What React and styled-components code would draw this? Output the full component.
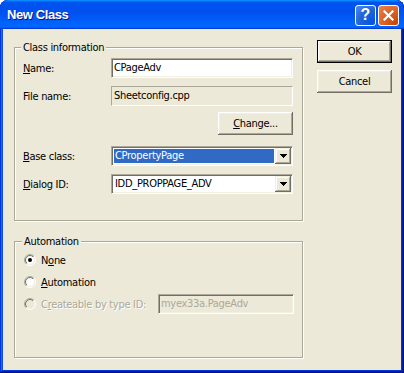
import React from 'react'
import styled, { createGlobalStyle } from 'styled-components'

const GlobalStyle = createGlobalStyle`
  html, body { margin: 0; padding: 0; background: #fff; }
  body {
    font-family: "DejaVu Sans", "Liberation Sans", sans-serif;
    font-stretch: condensed;
    font-size: 11px;
    letter-spacing: -0.3px;
    color: #000;
  }
`

const Window = styled.div`
  width: 404px;
  height: 373px;
  box-sizing: border-box;
  display: flex;
  flex-direction: column;
  background: #0831d9;
  border-radius: 8px 8px 0 0;
  overflow: hidden;
  box-shadow: inset -1px -1px #00138c, inset 1px 1px #0831d9, inset -2px -2px #001ea0,
    inset 2px 2px #166aee, inset -3px -3px #003bda, inset 3px 3px #0855dd;
`

const TitleBar = styled.div`
  height: 29px;
  flex: none;
  display: flex;
  align-items: center;
  padding: 0 5px 0 7px;
  background: linear-gradient(180deg, #0997ff, #0053ee 8%, #0050ee 40%, #06f 88%, #06f 93%, #005bff 95%, #003dd7 96%, #003dd7);
  border-radius: 8px 8px 0 0;
`

const Title = styled.div`
  flex: 1;
  font-family: "Liberation Sans", Arial, sans-serif;
  font-stretch: normal;
  font-weight: bold;
  font-size: 13px;
  color: #fff;
  text-shadow: 1px 1px #0f1089;
  letter-spacing: -0.4px;
`

const CaptionButton = styled.div`
  width: 21px;
  height: 21px;
  box-sizing: border-box;
  margin: 1px 0 0 ${p => p.$gap || 0}px;
  border: 1px solid #fff;
  border-radius: 3px;
  display: flex;
  align-items: center;
  justify-content: center;
  background: ${p => p.$close
    ? 'radial-gradient(circle at 90% 90%, #cc4600 0%, #dc6527 55%, #e8854f 100%)'
    : 'radial-gradient(circle at 90% 90%, #0054e9 0%, #2263d5 55%, #4f8cf2 100%)'};
  color: #fff;
  font-family: "Liberation Sans", Arial, sans-serif;
  font-stretch: normal;
  letter-spacing: 0;
  font-weight: bold;
  font-size: 16px;
`

const Client = styled.div`
  flex: 1;
  margin: 0 3px 3px;
  background: #ece9d8;
  display: flex;
  align-items: flex-start;
  padding: 11px 0 0 11px;
`

const LeftCol = styled.div`
  margin-top: 1px;
  display: flex;
  flex-direction: column;
`

const RightCol = styled.div`
  margin-left: 14px;
  display: flex;
  flex-direction: column;
  gap: 7px;
`

const Group = styled.fieldset`
  margin: ${p => p.$top || 0}px 0 0;
  padding: ${p => p.$pad};
  width: 289px;
  min-width: 0;
  box-sizing: border-box;
  border: 1px solid #aca899;
  box-shadow: inset 1px 1px #fff, 1px 1px #fff;
`

const Legend = styled.legend`
  padding: 0 2px;
  margin-left: -2px;
  line-height: 13px;
  background: #ece9d8;
`

const Row = styled.div`
  display: flex;
  align-items: center;
  justify-content: ${p => (p.$end ? 'flex-end' : 'flex-start')};
  margin-top: ${p => p.$top || 0}px;
`

const Label = styled.span`
  width: 88px;
  padding-top: 1px;
`

const Edit = styled.div`
  width: ${p => p.$w || 182}px;
  height: 20px;
  box-sizing: border-box;
  padding: 0 ${p => (p.$static ? 2 : 1)}px;
  line-height: ${p => (p.$static ? 18 : 16)}px;
  white-space: nowrap;
  overflow: hidden;
  margin-left: ${p => (p.$auto ? 'auto' : '0')};
  background: ${p => (p.$white ? '#fff' : '#ece9d8')};
  color: ${p => (p.$disabled ? '#aca899' : '#000')};
  border: 1px solid;
  border-color: #aca899 #fff #fff #aca899;
  box-shadow: ${p => (p.$static ? 'none' : 'inset 1px 1px #716f64, inset -1px -1px #f1efe2')};
  ${p => (p.$static ? '' : 'padding: 1px 2px;')}
`

const Combo = styled.div`
  width: 182px;
  height: 20px;
  box-sizing: border-box;
  display: flex;
  background: #fff;
  border: 1px solid;
  border-color: #aca899 #fff #fff #aca899;
  box-shadow: inset 1px 1px #716f64, inset -1px -1px #f1efe2;
  padding: 1px;
`

const ComboValue = styled.div`
  flex: 1;
  margin: 1px;
  padding: 0 1px;
  line-height: 14px;
  white-space: nowrap;
  background: ${p => (p.$selected ? '#316ac5' : '#fff')};
  color: ${p => (p.$selected ? '#fff' : '#000')};
`

const DropButton = styled.div`
  width: 16px;
  height: 16px;
  display: flex;
  align-items: center;
  justify-content: center;
  background: #ece9d8;
  box-shadow: inset -1px -1px #716f64, inset 1px 1px #f1efe2, inset -2px -2px #aca899, inset 2px 2px #fff;
`

const PushButton = styled.button`
  width: 75px;
  height: 23px;
  box-sizing: border-box;
  padding: 0;
  font: inherit;
  letter-spacing: inherit;
  color: #000;
  background: #ece9d8;
  border: ${p => (p.$default ? '1px solid #000' : 'none')};
  box-shadow: inset -1px -1px #716f64, inset 1px 1px #fff, inset -2px -2px #aca899, inset 2px 2px #f1efe2;
`

const RadioRow = styled.div`
  display: flex;
  align-items: center;
  height: 20px;
  margin-top: ${p => p.$top || 0}px;
  color: ${p => (p.$disabled ? '#aca899' : '#000')};
`

const RadioText = styled.span`
  margin-left: 5px;
  text-shadow: ${p => (p.$disabled ? '1px 1px #fff' : 'none')};
`

const Arrow = () => (
  <svg width="7" height="4" viewBox="0 0 7 4" shapeRendering="crispEdges">
    <rect x="0" y="0" width="7" height="1" fill="#000" />
    <rect x="1" y="1" width="5" height="1" fill="#000" />
    <rect x="2" y="2" width="3" height="1" fill="#000" />
    <rect x="3" y="3" width="1" height="1" fill="#000" />
  </svg>
)

const Radio = ({ checked, disabled, id }) => (
  <svg width="12" height="12" viewBox="0 0 12 12">
    <defs>
      <linearGradient id={`o${id}`} x1="0" y1="0" x2="1" y2="1">
        <stop offset="0.5" stopColor="#aca899" />
        <stop offset="0.5" stopColor="#fff" />
      </linearGradient>
      <linearGradient id={`i${id}`} x1="0" y1="0" x2="1" y2="1">
        <stop offset="0.5" stopColor="#716f64" />
        <stop offset="0.5" stopColor="#f1efe2" />
      </linearGradient>
    </defs>
    <circle cx="6" cy="6" r="5.5" fill="none" stroke={`url(#o${id})`} />
    <circle cx="6" cy="6" r="4.5" fill={disabled ? '#ece9d8' : '#fff'} stroke={`url(#i${id})`} />
    {checked && <circle cx="6" cy="6" r="2" fill="#000" />}
  </svg>
)

const Combobox = ({ value, selected }) => (
  <Combo>
    <ComboValue $selected={selected}>{value}</ComboValue>
    <DropButton><Arrow /></DropButton>
  </Combo>
)

export default function App() {
  return (
    <>
      <GlobalStyle />
      <Window>
        <TitleBar>
          <Title>New Class</Title>
          <CaptionButton>?</CaptionButton>
          <CaptionButton $close $gap={2}>
            <svg width="11" height="11" viewBox="0 0 11 11">
              <path d="M1.5 1.5 L9.5 9.5 M9.5 1.5 L1.5 9.5" stroke="#fff" strokeWidth="2.2" strokeLinecap="square" />
            </svg>
          </CaptionButton>
        </TitleBar>
        <Client>
          <LeftCol>
            <Group $pad="4px 9px 26px 8px">
              <Legend>Class information</Legend>
              <Row>
                <Label><u>N</u>ame:</Label>
                <Edit $white>CPageAdv</Edit>
              </Row>
              <Row $top={8}>
                <Label>File name:</Label>
                <Edit $static>Sheetconfig.cpp</Edit>
              </Row>
              <Row $top={6} $end>
                <PushButton><u>C</u>hange...</PushButton>
              </Row>
              <Row $top={11}>
                <Label><u>B</u>ase class:</Label>
                <Combobox value="CPropertyPage" selected />
              </Row>
              <Row $top={8}>
                <Label><u>D</u>ialog ID:</Label>
                <Combobox value="IDD_PROPPAGE_ADV" />
              </Row>
            </Group>
            <Group $top={14} $pad="2px 8px 43px 9px">
              <Legend>Automation</Legend>
              <RadioRow>
                <Radio id="r1" checked />
                <RadioText>N<u>o</u>ne</RadioText>
              </RadioRow>
              <RadioRow $top={2}>
                <Radio id="r2" />
                <RadioText><u>A</u>utomation</RadioText>
              </RadioRow>
              <RadioRow $top={2} $disabled>
                <Radio id="r3" disabled />
                <RadioText $disabled>C<u>r</u>eateable by type ID:</RadioText>
                <Edit $w={136} $auto $disabled>myex33a.PageAdv</Edit>
              </RadioRow>
            </Group>
          </LeftCol>
          <RightCol>
            <PushButton $default>OK</PushButton>
            <PushButton>Cancel</PushButton>
          </RightCol>
        </Client>
      </Window>
    </>
  )
}
